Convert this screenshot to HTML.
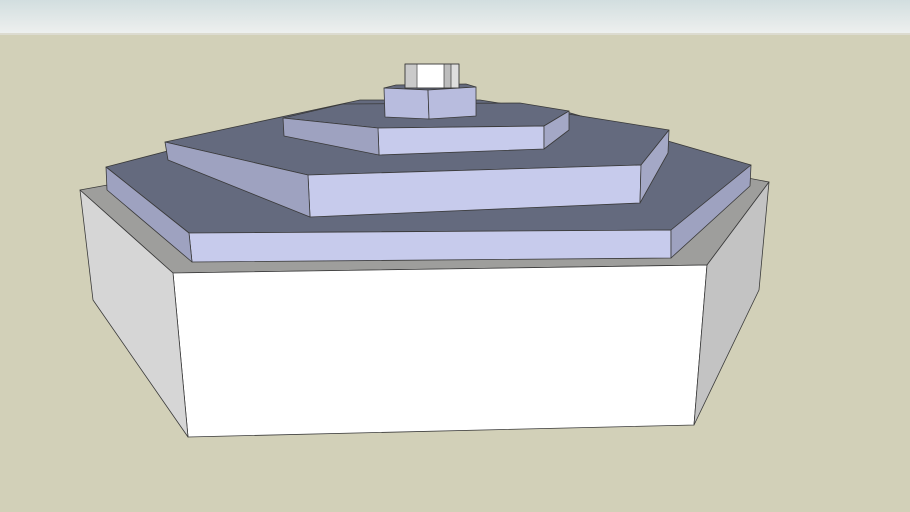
<!DOCTYPE html>
<html><head><meta charset="utf-8"><style>
html,body{margin:0;padding:0;width:910px;height:512px;overflow:hidden;background:#d2d0b8}
svg{display:block}
</style></head><body>
<svg width="910" height="512" viewBox="0 0 910 512" xmlns="http://www.w3.org/2000/svg">
<defs><linearGradient id="sky" x1="0" y1="0" x2="0" y2="1"><stop offset="0" stop-color="#d2dedf"/><stop offset="1" stop-color="#eef0ef"/></linearGradient></defs>
<rect x="0" y="0" width="910" height="34" fill="url(#sky)"/>
<rect x="0" y="33" width="910" height="2" fill="#dcdbd0"/>
<rect x="0" y="35" width="910" height="477" fill="#d2d0b8"/>
<g stroke="#3a3a3a" stroke-width="0.8" stroke-linejoin="round">
<!-- base box -->
<polygon points="80,190 300,150 600,150 769,182 707,265 173,273" fill="#9e9e9c"/>
<polygon points="173,273 707,265 694,425 188,437" fill="#ffffff"/>
<polygon points="80,190 173,273 188,437 93,300" fill="#d6d6d6"/>
<polygon points="707,265 769,182 759,290 694,425" fill="#c3c3c3"/>
<!-- layer 1 -->
<polygon points="106,167 345,105 560,110 751,165 671,230 189,233" fill="#646a7e"/>
<polygon points="189,233 671,230 671,258 192,262" fill="#c7cbec"/>
<polygon points="106,167 189,233 192,262 107,190" fill="#9ea2c0"/>
<polygon points="671,230 751,165 750,186 671,258" fill="#9ea2c0"/>
<!-- layer 2 -->
<polygon points="165,142 360,100 480,100 669,130 641,165 308,175" fill="#646a7e"/>
<polygon points="308,175 641,165 640,203 310,217" fill="#c7cbec"/>
<polygon points="165,142 308,175 310,217 168,160" fill="#9ea2c0"/>
<polygon points="641,165 669,130 668,153 640,203" fill="#a4a8c6"/>
<!-- layer 3 -->
<polygon points="283,118 343,104 520,103 569,111 544,126 378,128" fill="#646a7e"/>
<polygon points="378,128 544,126 544,149 379,155" fill="#c7cbec"/>
<polygon points="283,118 378,128 379,155 284,136" fill="#9ea2c0"/>
<polygon points="544,126 569,111 569,130 544,149" fill="#a4a8c6"/>
<!-- nut -->
<polygon points="384,88 396,85 466,84 476,87 428,90" fill="#646a7e"/>
<polygon points="384,88 428,90 429,119 385,117" fill="#b8bcde"/>
<polygon points="428,90 476,87 476,116 429,119" fill="#b8bcde"/>
<!-- bolt -->
<polygon points="405,64 459,64 459,88 405,88" fill="#ffffff"/>
</g>
<rect x="405.5" y="64.5" width="11" height="23" fill="#cacaca"/>
<rect x="444" y="64.5" width="7" height="23" fill="#bdbdbd"/>
<rect x="451" y="64.5" width="7.5" height="23" fill="#dedede"/>
<g stroke="#3a3a3a" stroke-width="0.7" fill="none">
<line x1="417" y1="64" x2="417" y2="88"/><line x1="444" y1="64" x2="444" y2="88"/><line x1="451" y1="64" x2="451" y2="88"/>
<rect x="405" y="64" width="54" height="24"/>
</g>
</svg>
</body></html>
